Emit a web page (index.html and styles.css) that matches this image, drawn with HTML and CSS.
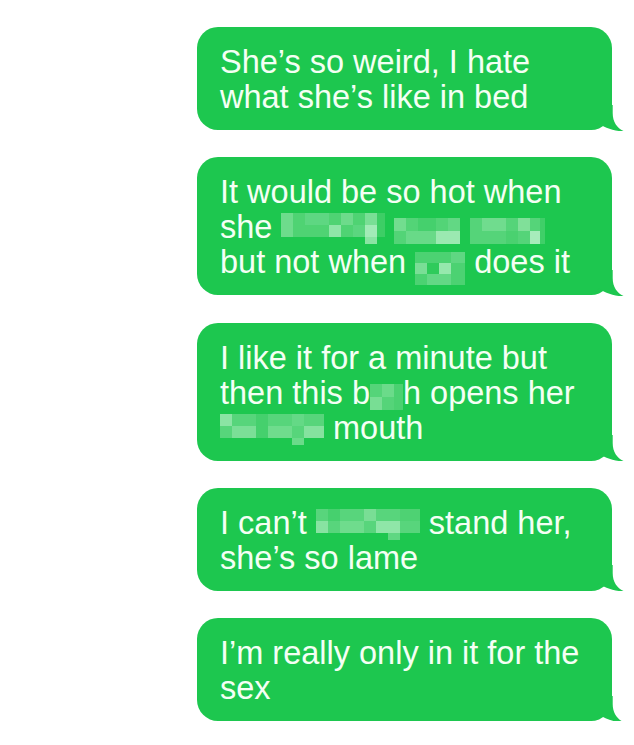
FILE: index.html
```html
<!DOCTYPE html>
<html lang="en">
<head>
  <meta charset="UTF-8" />
  <meta name="viewport" content="width=device-width, initial-scale=1.0"/>
  <title>Messages</title>
  <link rel="stylesheet" href="styles.css">
</head>
<body>

<section class="thread">

  <div class="bubble">
    She’s so weird, I hate what she’s like in bed
    <svg class="tail" viewBox="0 0 33 27"><path d="M21.7 0 V8 C21.7 17 26 23 32.5 26 C24 26.5 14 23 8 18.5 C5 22 3 24.5 0 24.5 V0 Z"/></svg>
  </div>

  <div class="bubble">
    It would be so hot when<br>she
    <svg class="pix" width="104" height="31" viewBox="0 0 104 31">
      <rect width="104" height="24" fill="#4fd373"/>
      <rect x="0" width="12" height="24" fill="#6edc8c"/>
      <rect x="24" y="0" width="24" height="12" fill="#5ed782"/>
      <rect x="48" y="12" width="12" height="12" fill="#8fe6a8"/>
      <rect x="60" y="0" width="12" height="12" fill="#6ddb8b"/>
      <rect x="72" y="12" width="12" height="12" fill="#5bd67f"/>
      <rect x="84" y="0" width="12" height="12" fill="#79df95"/>
      <rect x="84" y="12" width="12" height="12" fill="#a2ebb7"/>
      <rect x="96" y="0" width="8" height="24" fill="#3dce65"/>
      <rect x="84" y="24" width="12" height="7" fill="#8ae4a3"/>
    </svg>
    <svg class="pix" width="66" height="26" viewBox="0 0 66 26">
      <rect width="66" height="26" fill="#53d477"/>
      <rect x="0" width="12" height="13" fill="#72dd8f"/>
      <rect x="24" width="18" height="13" fill="#45d06d"/>
      <rect x="12" y="13" width="30" height="13" fill="#68da88"/>
      <rect x="42" y="13" width="24" height="13" fill="#9be9b1"/>
      <rect x="54" width="12" height="13" fill="#62d884"/>
    </svg>
    <svg class="pix" width="75" height="26" viewBox="0 0 75 26">
      <rect width="75" height="26" fill="#55d479"/>
      <rect x="12" width="24" height="13" fill="#70dc8e"/>
      <rect x="36" y="13" width="12" height="13" fill="#4ad170"/>
      <rect x="48" width="12" height="13" fill="#80e099"/>
      <rect x="60" y="13" width="10" height="13" fill="#a7ecbb"/>
      <rect x="70" width="5" height="26" fill="#3fcf68"/>
    </svg>
    <br>but not when
    <svg class="pix pix-low" width="50" height="33" viewBox="0 0 50 33">
      <rect width="50" height="33" fill="#4cd272"/>
      <rect x="0" y="11" width="12" height="11" fill="#7ade96"/>
      <rect x="12" y="11" width="12" height="11" fill="#2fcb5b"/>
      <rect x="24" y="11" width="12" height="11" fill="#96e8ad"/>
      <rect x="36" y="0" width="14" height="11" fill="#5fd782"/>
      <rect x="12" y="22" width="24" height="11" fill="#63d885"/>
    </svg>
    does it
    <svg class="tail" viewBox="0 0 33 27"><path d="M21.7 0 V8 C21.7 17 26 23 32.5 26 C24 26.5 14 23 8 18.5 C5 22 3 24.5 0 24.5 V0 Z"/></svg>
  </div>

  <div class="bubble">
    I like it for a minute but then this b<svg class="pix" width="33" height="26" viewBox="0 0 33 26">
      <rect width="33" height="26" fill="#55d479"/>
      <rect x="0" y="13" width="12" height="13" fill="#78de94"/>
      <rect x="12" width="12" height="13" fill="#6bdb8a"/>
      <rect x="24" width="9" height="26" fill="#4bd171"/>
    </svg>h opens her
    <svg class="pix" width="104" height="31" viewBox="0 0 104 31">
      <rect width="104" height="24" fill="#57d57b"/>
      <rect x="0" width="12" height="12" fill="#8be4a4"/>
      <rect x="12" y="12" width="24" height="12" fill="#7bdf97"/>
      <rect x="36" width="12" height="24" fill="#45d06d"/>
      <rect x="48" y="12" width="24" height="12" fill="#6fdc8d"/>
      <rect x="72" width="12" height="12" fill="#64d986"/>
      <rect x="84" y="12" width="20" height="12" fill="#85e29f"/>
      <rect x="72" y="24" width="12" height="7" fill="#6adb8a"/>
    </svg>
    mouth
    <svg class="tail" viewBox="0 0 33 27"><path d="M21.7 0 V8 C21.7 17 26 23 32.5 26 C24 26.5 14 23 8 18.5 C5 22 3 24.5 0 24.5 V0 Z"/></svg>
  </div>

  <div class="bubble">
    I can’t
    <svg class="pix" width="104" height="31" viewBox="0 0 104 31">
      <rect width="104" height="24" fill="#58d57c"/>
      <rect x="0" y="12" width="12" height="12" fill="#88e3a2"/>
      <rect x="12" width="12" height="12" fill="#46d06e"/>
      <rect x="24" y="12" width="24" height="12" fill="#6fdc8d"/>
      <rect x="48" width="12" height="12" fill="#79de95"/>
      <rect x="60" y="12" width="24" height="12" fill="#8fe6a8"/>
      <rect x="84" width="20" height="12" fill="#4ed273"/>
      <rect x="72" y="24" width="12" height="7" fill="#5fd782"/>
    </svg>
    stand her, she’s so lame
    <svg class="tail" viewBox="0 0 33 27"><path d="M21.7 0 V8 C21.7 17 26 23 32.5 26 C24 26.5 14 23 8 18.5 C5 22 3 24.5 0 24.5 V0 Z"/></svg>
  </div>

  <div class="bubble">
    I’m really only in it for the sex
    <svg class="tail" viewBox="0 0 33 27"><path d="M21.7 0 V8 C21.7 17 26 23 32.5 26 C24 26.5 14 23 8 18.5 C5 22 3 24.5 0 24.5 V0 Z"/></svg>
  </div>

</section>

</body>
</html>
```

FILE: styles.css
```css
* { box-sizing: border-box; }
body {
  margin: 0;
  background: #fff;
  font-family: 'Liberation Sans', Arial, sans-serif;
}

.thread {
  display: flex;
  flex-direction: column;
  align-items: flex-end;
  gap: 27.25px;
  padding: 27px 22px 0 0;
}

.bubble {
  position: relative;
  width: 415px;
  padding: 18px 18px 15px 23px;
  background: #1dc74f;
  color: #f4fff4;
  border-radius: 21px;
  font-size: 32.5px;
  line-height: 35px;
}

.tail {
  position: absolute;
  right: -11.5px;
  bottom: -1.5px;
  width: 33px;
  height: 27px;
  fill: #1dc74f;
}

.pix {
  display: inline-block;
  vertical-align: -6px;
}
.pix-low {
  vertical-align: -5px;
  margin-bottom: -7px;
}
```
